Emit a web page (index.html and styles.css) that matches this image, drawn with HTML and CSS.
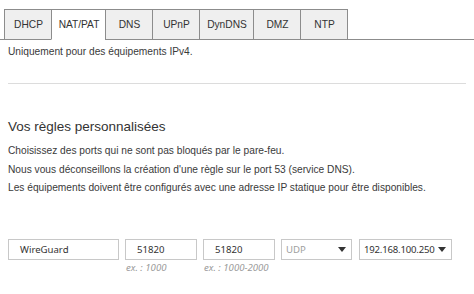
FILE: index.html
```html
<!DOCTYPE html>
<html lang="fr">
<head>
<meta charset="utf-8">
<title>NAT/PAT</title>
<link rel="stylesheet" href="styles.css">
</head>
<body>
<nav class="tabs">
  <span class="tab">DHCP</span>
  <span class="tab wide active">NAT/PAT</span>
  <span class="tab">DNS</span>
  <span class="tab">UPnP</span>
  <span class="tab wide">DynDNS</span>
  <span class="tab">DMZ</span>
  <span class="tab last">NTP</span>
</nav>
<main class="content">
  <p class="note">Uniquement pour des équipements IPv4.</p>
  <hr class="sep">
  <h2 class="title">Vos règles personnalisées</h2>
  <p class="line">Choisissez des ports qui ne sont pas bloqués par le pare-feu.</p>
  <p class="line">Nous vous déconseillons la création d'une règle sur le port 53 (service DNS).</p>
  <p class="line">Les équipements doivent être configurés avec une adresse IP statique pour être disponibles.</p>
  <form class="rule">
    <div class="field name"><div class="box">WireGuard</div></div>
    <div class="field port"><div class="box">51820</div><span class="hint">ex. : 1000</span></div>
    <div class="field port"><div class="box">51820</div><span class="hint">ex. : 1000-2000</span></div>
    <div class="field proto"><div class="box select muted">UDP<svg class="arrow" width="8" height="5" viewBox="0 0 8 5"><path d="M0 0H8L4 5Z" fill="#333"/></svg></div></div>
    <div class="field ip"><div class="box select"><span class="ipval">192.168.100.250</span><svg class="arrow" width="8" height="5" viewBox="0 0 8 5"><path d="M0 0H8L4 5Z" fill="#333"/></svg></div></div>
  </form>
</main>
</body>
</html>
```

FILE: styles.css
```css
* { box-sizing: border-box; }
html, body { margin: 0; padding: 0; background: #fff; }
body {
  font-family: "Liberation Sans", Arial, sans-serif;
  color: #3a3a3a;
  font-size: 10.2px;
}
.tabs {
  display: flex;
  margin-top: 9px;
  height: 31px;
}
.tabs::before {
  content: "";
  width: 4px;
  border-bottom: 1px solid #8c8c8c;
}
.tabs::after {
  content: "";
  flex: 1;
  border-bottom: 1px solid #8c8c8c;
}
.tab {
  display: flex;
  align-items: center;
  justify-content: center;
  width: 47px;
  padding: 0 0 0 1px;
  height: 31px;
  background: #efefef;
  border-top: 1px solid #8c8c8c;
  border-left: 1px solid #8c8c8c;
  border-bottom: 1px solid #8c8c8c;
  color: #333;
  font-size: 10.2px;
  white-space: nowrap;
}
.tab.wide { width: 54px; }
.tab.active { background: #fff; border-bottom-color: transparent; }
.tab.last { border-right: 1px solid #8c8c8c; width: 48px; }
.content { padding: 0 8px; }
.note { margin: 3px 0 0; line-height: 18px; }
.sep {
  margin: 22px 0 0;
  border: 0;
  border-top: 1px solid #dcdcdc;
  height: 0;
}
.title {
  margin: 33px 0 0;
  font-size: 13.5px;
  font-weight: normal;
  line-height: 20px;
  color: #333;
}
.line { margin: 0; line-height: 18.5px; }
.title + .line { margin-top: 5px; }
.rule {
  display: flex;
  gap: 6px;
  margin-top: 41px;
  font-family: "Noto Sans", "Open Sans", sans-serif;
}
.field { display: flex; flex-direction: column; }
.name { width: 111px; }
.port { width: 72px; }
.proto { width: 71px; margin-right: 1px; }
.ip { width: 93px; }
.box {
  height: 21px;
  border: 1px solid #c8c8c8;
  display: flex;
  align-items: center;
  padding: 0 4px 0 11px;
  font-size: 9.6px;
  color: #333;
}
.select { justify-content: space-between; padding-left: 4px; padding-right: 5px; }
.ipval { letter-spacing: -0.2px; }
.muted { color: #a0a0a0; }
.arrow { flex: none; }
.hint {
  font-style: italic;
  color: #9a9a9a;
  font-size: 9.6px;
  padding-left: 1px;
  line-height: 13px;
  margin-top: 1px;
}
```
